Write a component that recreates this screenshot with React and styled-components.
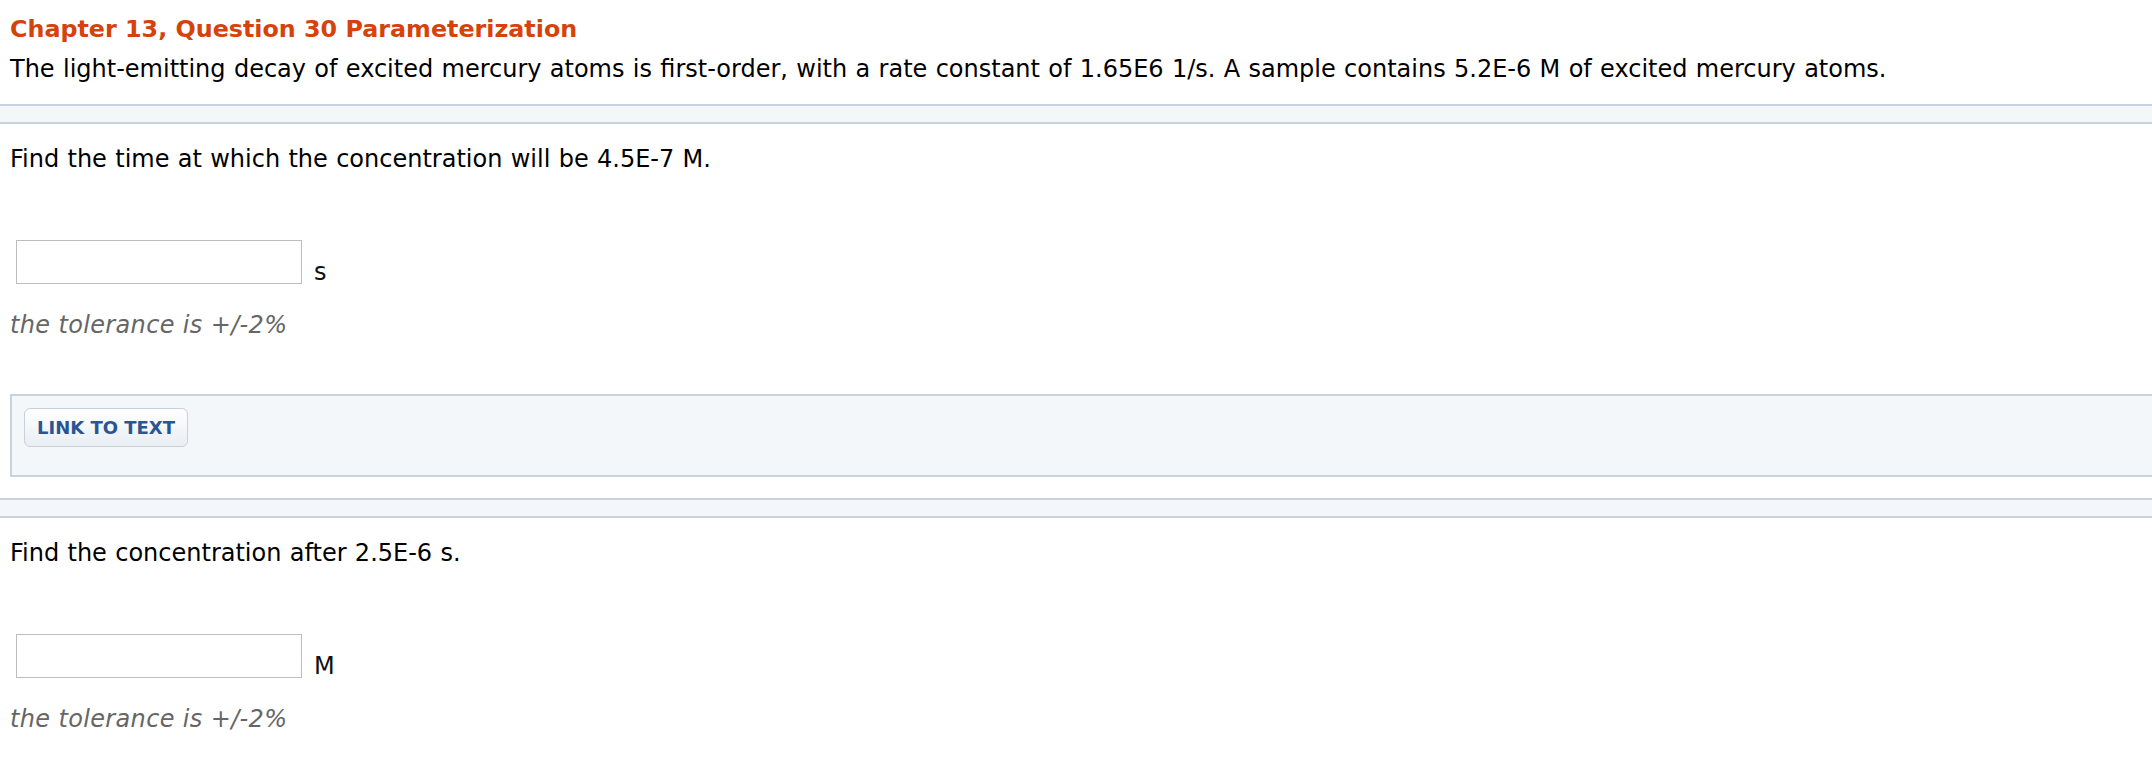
import React from 'react'
import styled, { createGlobalStyle } from 'styled-components'

const GlobalStyle = createGlobalStyle`
  html, body {
    margin: 0;
    padding: 0;
    background: #fff;
  }
  body {
    font-family: "DejaVu Sans", Verdana, sans-serif;
    color: #000;
    overflow: hidden;
  }
`

const Page = styled.main`
  display: flex;
  flex-direction: column;
  width: 100%;
`

const Head = styled.header`
  padding: 14px 10px 19px;
`

const Title = styled.h1`
  margin: 0;
  font-size: 23.8px;
  line-height: 30px;
  font-weight: bold;
  color: #d4430b;
`

const Intro = styled.p`
  margin: 9px 0 0;
  font-size: 24px;
  line-height: 32px;
  word-spacing: 0.7px;
`

const Divider = styled.hr`
  margin: 0;
  height: 16px;
  border: 0;
  border-top: 2px solid #c9d3e0;
  border-bottom: 2px solid #c9d3e0;
  background: #f4f7fa;
`

const Part = styled.section`
  padding: 19px 10px 0;
`

const Prompt = styled.p`
  margin: 0;
  font-size: 24px;
  line-height: 32px;
  word-spacing: 0.7px;
`

const AnswerRow = styled.div`
  display: flex;
  align-items: flex-end;
  gap: 12px;
  margin: 65px 0 0 6px;
`

const Field = styled.input`
  box-sizing: border-box;
  width: 286px;
  height: 44px;
  margin: 0;
  border: 1px solid #bdbdbd;
  background: #fff;
  font: inherit;
`

const Unit = styled.span`
  font-size: 24px;
  line-height: 24px;
  color: #111;
`

const Tolerance = styled.p`
  margin: 25px 0 0;
  font-size: 24px;
  line-height: 32px;
  font-style: italic;
  letter-spacing: 0.35px;
  color: #666;
`

const LinkBox = styled.div`
  margin: 53px 0 21px 10px;
  padding: 12px 12px 28px;
  border: 2px solid #c9d3e0;
  border-right: 0;
  background: #f4f7fa;
`

const LinkButton = styled.button`
  box-sizing: border-box;
  height: 39px;
  padding: 0 12px;
  border: 1px solid #c9d0da;
  border-radius: 6px;
  background: linear-gradient(#ffffff, #e9eef3);
  font-family: "DejaVu Sans", Verdana, sans-serif;
  font-size: 18px;
  font-weight: bold;
  line-height: 37px;
  color: #2a5592;
  text-transform: uppercase;
  cursor: pointer;
`

const Question = ({ prompt, unit }) => (
  <Part>
    <Prompt>{prompt}</Prompt>
    <AnswerRow>
      <Field type="text" />
      <Unit>{unit}</Unit>
    </AnswerRow>
    <Tolerance>the tolerance is +/-2%</Tolerance>
  </Part>
)

export default function App() {
  return (
    <>
      <GlobalStyle />
      <Page>
        <Head>
          <Title>Chapter 13, Question 30 Parameterization</Title>
          <Intro>
            The light-emitting decay of excited mercury atoms is first-order, with a rate constant of 1.65E6 1/s. A
            sample contains 5.2E-6 M of excited mercury atoms.
          </Intro>
        </Head>
        <Divider />
        <Question prompt="Find the time at which the concentration will be 4.5E-7 M." unit="s" />
        <LinkBox>
          <LinkButton>Link to Text</LinkButton>
        </LinkBox>
        <Divider />
        <Question prompt="Find the concentration after 2.5E-6 s." unit="M" />
      </Page>
    </>
  )
}
